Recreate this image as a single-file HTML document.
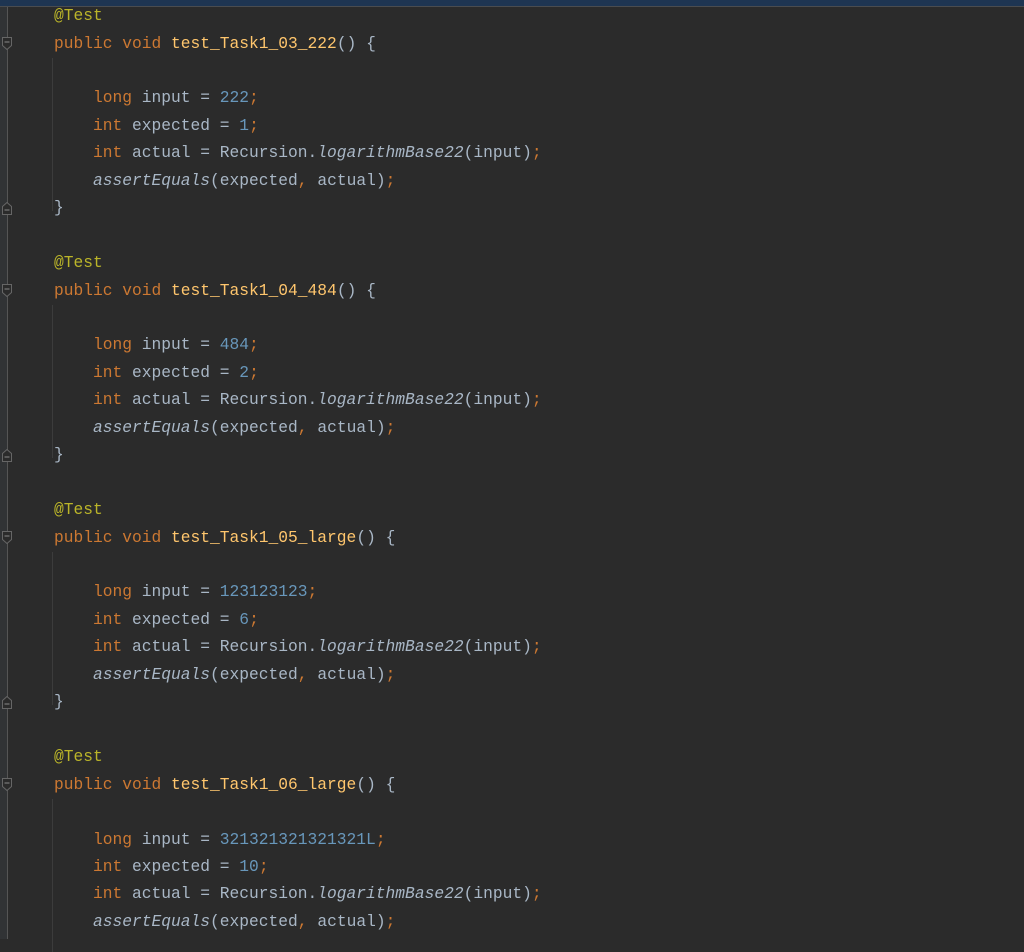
<!DOCTYPE html>
<html><head><meta charset="utf-8"><style>
html,body{margin:0;padding:0;}
body{width:1024px;height:939px;background:#2b2b2b;overflow:hidden;position:relative;font-family:"Liberation Mono",monospace;font-size:16.25px;}
.top{position:absolute;left:0;top:0;width:1024px;height:6px;background:#1e3552;}
.top2{position:absolute;left:0;top:6px;width:1024px;height:1px;background:#4a4c4f;}
.gut{position:absolute;left:0;top:7px;width:7px;height:932px;background:#313335;}
.gl{position:absolute;left:7px;top:7px;width:1px;height:932px;background:#555;}
.ig{position:absolute;left:52px;width:1px;background:#3c3c3c;}
.l{position:absolute;left:54px;white-space:pre;color:#a9b7c6;line-height:20px;}
.k{color:#cc7832}.a{color:#bbb529}.f{color:#ffc66d}.n{color:#6897bb}.i{font-style:italic}
.fold{position:absolute;left:2px;width:10px;height:13px;}
</style></head><body>
<div class="top"></div><div class="top2"></div><div class="gut"></div><div class="gl"></div>
<div id="c"></div>
<script>
var blocks=[["03_222","222","1"],["04_484","484","2"],["05_large","123123123","6"],["06_large","321321321321321L","10"]];
var h='';var y0=16,lh=27.45;var line=0;
function L(x,html){h+='<div class="l" style="left:'+x+'px;top:'+(y0+line*lh-10).toFixed(1)+'px">'+html+'</div>';line++;}
blocks.forEach(function(b,bi){
 L(54,'<span class="a">@Test</span>');
 var fy=y0+line*lh;
 h+='<svg class="fold" style="top:'+(fy-7).toFixed(1)+'px" viewBox="0 0 10 13"><path d="M0.5 0.5H9.5V8.5L5 12.5L0.5 8.5Z" fill="#2b2b2b" stroke="#666"/><path d="M2.5 5H7.5" stroke="#888"/></svg>';
 h+='<div class="ig" style="top:'+(fy+14).toFixed(1)+'px;height:'+(lh*5.6).toFixed(1)+'px"></div>';
 L(54,'<span class="k">public void </span><span class="f">test_Task1_'+b[0]+'</span>() {');
 line++;
 L(93,'<span class="k">long </span>input = <span class="n">'+b[1]+'</span><span class="k">;</span>');
 L(93,'<span class="k">int </span>expected = <span class="n">'+b[2]+'</span><span class="k">;</span>');
 L(93,'<span class="k">int </span>actual = Recursion.<span class="i">logarithmBase22</span>(input)<span class="k">;</span>');
 L(93,'<span class="i">assertEquals</span>(expected<span class="k">, </span>actual)<span class="k">;</span>');
 if(bi<3){var cy=y0+line*lh;
 h+='<svg class="fold" style="top:'+(cy-6).toFixed(1)+'px" viewBox="0 0 10 13"><path d="M0.5 12.5H9.5V4.5L5 0.5L0.5 4.5Z" fill="#2b2b2b" stroke="#666"/><path d="M2.5 8H7.5" stroke="#888"/></svg>';
 L(54,'}');line++;}
});
document.getElementById('c').innerHTML=h;
</script>
</body></html>
